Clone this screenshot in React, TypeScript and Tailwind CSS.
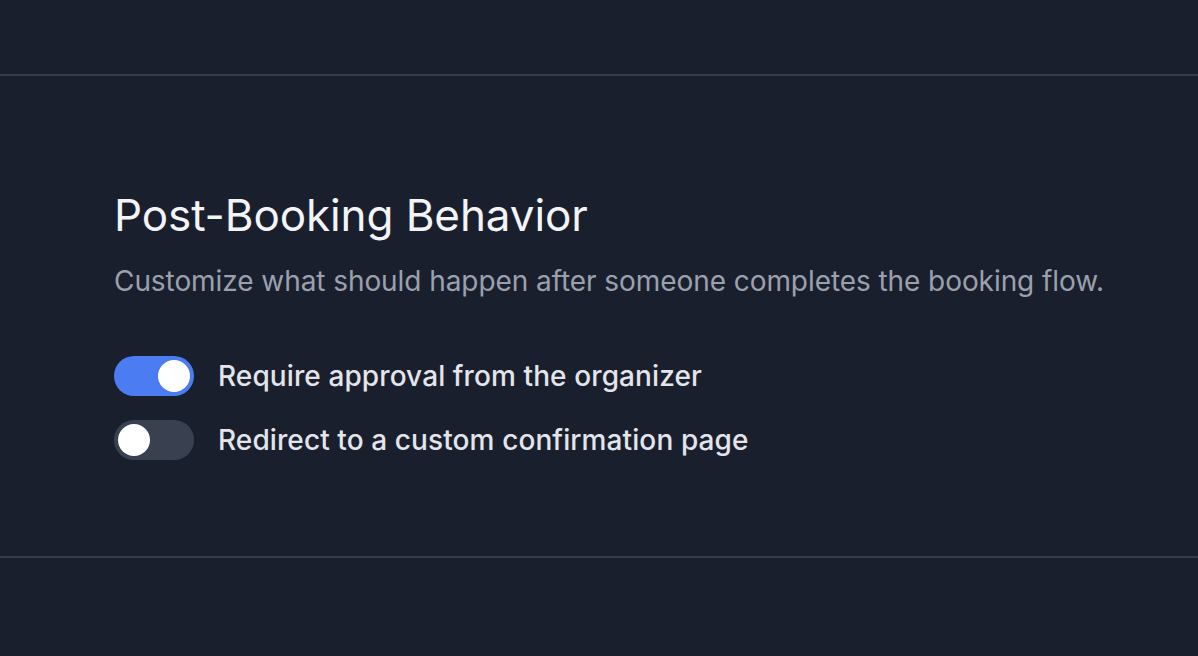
import { useState } from "react";

function Toggle({ on, onClick }: { on: boolean; onClick: () => void }) {
  return (
    <button
      type="button"
      onClick={onClick}
      className={`relative h-[40px] w-[80px] shrink-0 rounded-full transition-colors ${
        on ? "bg-[#4b7cf1]" : "bg-[#394150]"
      }`}
    >
      <span
        className={`absolute top-[4px] h-[32px] w-[32px] rounded-full bg-white transition-all ${
          on ? "left-[44px]" : "left-[4px]"
        }`}
      />
    </button>
  );
}

export default function App() {
  const [approval, setApproval] = useState(true);
  const [redirect, setRedirect] = useState(false);

  return (
    <div
      className="min-h-screen w-full bg-[#1a1f2e]"
      style={{ fontFamily: "Inter, 'Noto Sans', sans-serif" }}
    >
      <div className="h-[74px]" />
      <section className="h-[484px] border-y-2 border-[#363c4b] px-[114px] pt-[113px]">
        <h2 className="text-[44px] leading-[52px] font-normal tracking-[-0.1px] text-[#f3f4f6]">
          Post-Booking Behavior
        </h2>
        <p className="mt-[22px] whitespace-nowrap text-[28px] leading-[36px] tracking-[-0.07px] text-[#9aa1ad]">
          Customize what should happen after someone completes the booking flow.
        </p>
        <div className="mt-[57px] flex flex-col gap-[24px]">
          <label className="flex items-center gap-[24px]">
            <Toggle on={approval} onClick={() => setApproval(!approval)} />
            <span className="whitespace-nowrap text-[28px] leading-[40px] font-medium tracking-[0.1px] text-[#e3e5ea]">
              Require approval from the organizer
            </span>
          </label>
          <label className="flex items-center gap-[24px]">
            <Toggle on={redirect} onClick={() => setRedirect(!redirect)} />
            <span className="whitespace-nowrap text-[28px] leading-[40px] font-medium tracking-[0.1px] text-[#e3e5ea]">
              Redirect to a custom confirmation page
            </span>
          </label>
        </div>
      </section>
    </div>
  );
}
